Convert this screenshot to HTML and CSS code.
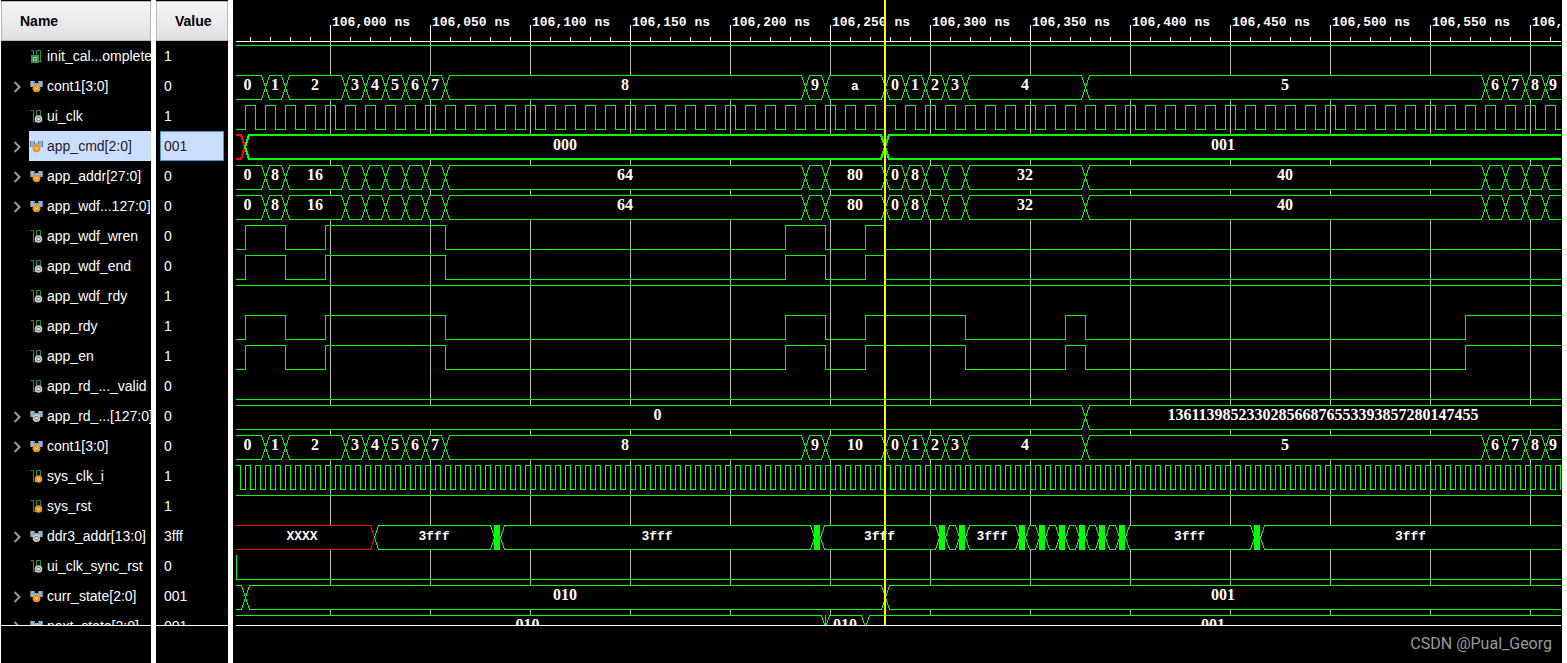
FILE: index.html
```html
<!DOCTYPE html>
<html lang="en">
<head>
	<meta charset="UTF-8">
	<title>Waveform</title>
	<link rel="stylesheet" href="styles.css">
</head>
<body>
	<svg class="defs" aria-hidden="true">
		<symbol id="icon-lock" viewBox="0 0 13 13">
			<path d="M1 0.5H3.5V6M6.5 6V0.5H10.5V11.5M9 11.5H12" fill="none" stroke="#239445"/>
			<rect x="1" y="5" width="8" height="8" fill="#3c8c4a"/>
			<rect x="3.5" y="7.5" width="3" height="3" fill="none" stroke="#8cc898"/>
		</symbol>
		<symbol id="icon-bit" viewBox="0 0 13 13">
			<path d="M1 0.5H3.5V11.5H6.5V0.5H10.5V6" fill="none" stroke="#239445"/>
			<circle cx="8.5" cy="9" r="3" fill="#777" stroke="#ccc" stroke-width="1.6"/>
			<circle cx="8.5" cy="9" r="1.3" fill="#eee"/>
		</symbol>
		<symbol id="icon-bit-v" viewBox="0 0 13 13">
			<path d="M1 0.5H3.5V11.5H6.5V0.5H10.5V6" fill="none" stroke="#239445"/>
			<circle cx="8.5" cy="9" r="3.8" fill="#f0921e"/>
			<path d="M7 7.5L8.5 10.5L10 7.5" fill="none" stroke="#ffe0b0"/>
		</symbol>
		<symbol id="icon-bus" viewBox="0 0 13 13">
			<path d="M0 1H5V3H8V1H13V7H10L8 5H5L3 7H0Z" fill="#8fb4cc"/>
			<path d="M0 1H1V7H0ZM12 1H13V7H12ZM4 1H5V4H4ZM8 1H9V4H8Z" fill="#5f7f94"/>
			<circle cx="6.5" cy="8.3" r="3" fill="#777" stroke="#ccc" stroke-width="1.6"/>
			<circle cx="6.5" cy="8.3" r="1.3" fill="#eee"/>
		</symbol>
		<symbol id="icon-bus-v" viewBox="0 0 13 13">
			<path d="M0 1H5V3H8V1H13V7H10L8 5H5L3 7H0Z" fill="#8fb4cc"/>
			<path d="M0 1H1V7H0ZM12 1H13V7H12ZM4 1H5V4H4ZM8 1H9V4H8Z" fill="#5f7f94"/>
			<circle cx="6.5" cy="8.3" r="3.9" fill="#f0921e"/>
			<path d="M5 6.8L6.5 9.8L8 6.8" fill="none" stroke="#ffe0b0"/>
		</symbol>
	</svg>

	<main class="viewer">
		<section class="pane names">
			<h2 class="head">Name</h2>
			<ul class="rows" id="names"></ul>
			<div class="foot"></div>
		</section>
		<section class="pane values">
			<h2 class="head">Value</h2>
			<ul class="rows" id="values"></ul>
			<div class="foot"></div>
		</section>
		<section class="pane waves">
			<svg class="ruler" id="ruler"></svg>
			<div class="rows" id="waves"></div>
			<div class="foot"><span class="mark">CSDN @Pual_Georg</span></div>
			<div class="cursor"></div>
		</section>
	</main>

	<script src="wave.js"></script>
</body>
</html>
```
FILE: styles.css
```css
body{
	margin: 0;
	background: #fff;
	font-family: "Liberation Sans", Arial, sans-serif;
	font-size: 14px;
}

.defs{
	position: absolute;
	width: 0;
	height: 0;
}

.viewer{
	display: flex;
	gap: 5px;
	height: 100vh;
	padding: 0 5px 0 1px;
	box-sizing: border-box;
}

.pane{
	display: flex;
	flex-direction: column;
	background: #000;
	color: #fff;
	overflow: hidden;
}

.names{
	flex: 0 0 150px;
}

.values{
	flex: 0 0 72px;
}

.waves{
	flex: 1;
	min-width: 0;
	position: relative;
}

.head{
	flex: 0 0 40px;
	margin: 1px 0 0;
	padding-left: 18px;
	box-sizing: border-box;
	border: 1px solid #b9b9bb;
	background: linear-gradient(#f6f6f6, #e0e0e4);
	color: #000;
	font-size: 14px;
	line-height: 38px;
}

.rows{
	flex: 1;
	min-height: 0;
	margin: 0;
	padding: 0;
	list-style: none;
	overflow: hidden;
}

.foot{
	flex: 0 0 37px;
	border-top: 1px solid #fff;
}

/* name column */
.name{
	display: flex;
	align-items: center;
	height: 30px;
	white-space: nowrap;
}

.toggle{
	flex: 0 0 28px;
	height: 30px;
	padding: 2px 0 0 12px;
	box-sizing: border-box;
	border: 0;
	background: none;
	text-align: left;
}

.toggle svg{
	display: block;
	width: 8px;
	height: 12px;
	fill: none;
	stroke: #999;
	stroke-width: 2;
}

.label{
	display: flex;
	align-items: center;
	flex: 1;
	gap: 4px;
	padding-left: 1px;
	line-height: 30px;
}

.label svg{
	flex: 0 0 13px;
	height: 13px;
}

/* value column */
.value{
	height: 30px;
	margin: 0 4px;
	padding-left: 4px;
	box-sizing: border-box;
	line-height: 30px;
}

.selected .label{
	background: #ccdeff;
	color: #1c1c2c;
}

.value.selected{
	padding-left: 3px;
	border: 1px solid #4a96d8;
	background: #ccdeff;
	color: #1c1c2c;
	line-height: 28px;
}

/* wave column */
.ruler{
	flex: 0 0 42px;
	margin: 0 1px 0 3px;
	shape-rendering: crispEdges;
}

.ruler path{
	fill: none;
	stroke: #fff;
}

.ruler text{
	fill: #fff;
	font: bold 13px "Liberation Mono", "Courier New", monospace;
}

.waves .rows{
	margin: -1px 1px 0 3px;
}

.waves .foot{
	margin: 0 1px 0 3px;
}

.wave{
	display: block;
	width: 100%;
	height: 30px;
	shape-rendering: crispEdges;
}

.wave text{
	fill: #fff;
	font: bold 16px "Liberation Serif", "Times New Roman", serif;
	text-anchor: middle;
}

.wave .hex{
	font: bold 13px "Liberation Mono", "Courier New", monospace;
}

.grid{
	stroke: #b8b8b8;
}

.sig{
	fill: none;
	stroke: #0f0;
}

.bus{
	fill: #000;
	stroke: #0f0;
}

.thick{
	stroke-width: 2;
}

.unknown{
	stroke: #f00;
}

.burst{
	fill: #0f0;
}

.cursor{
	position: absolute;
	left: 651px;
	top: 0;
	bottom: 38px;
	width: 2px;
	background: #ff0;
}

.mark{
	display: block;
	padding-right: 9px;
	color: #999;
	font: 16px/36px Roboto, sans-serif;
	text-align: right;
}
```
FILE: wave.js
```javascript
var START = -6,   // the first segment begins a little before the pane
	GRID = 94,    // x of 106,000 ns, 2px per ns
	TOP = 4.5,
	BOTTOM = 28.5;

// bus: [end x, label], the last one runs to the edge of the pane
var count = [[29,"0"],[49,"1"],[109,"2"],[129,"3"],[149,"4"],[169,"5"],[189,"6"],[209,"7"],[569,"8"],[589,"9"],[649,"a"],
	[669,"0"],[689,"1"],[709,"2"],[729,"3"],[849,"4"],[1249,"5"],[1269,"6"],[1289,"7"],[1309,"8"],[null,"9"]];
var count10 = count.map(function(s){ return s[1] == "a" ? [s[0],"10"] : s; });
var addr = [[29,"0"],[49,"8"],[109,"16"],[129,""],[149,""],[169,""],[189,""],[209,""],[569,"64"],[589,""],[649,"80"],
	[669,"0"],[689,"8"],[709,""],[729,""],[849,"32"],[1249,"40"],[1269,""],[1289,""],[1309,""],[null,""]];
// third value is the width of a burst of changes that follows
var ddr = [[138,"XXXX"],[258,"3fff",6],[578,"3fff",6],[703,"3fff",6],[723,"",6],[783,"3fff",6],[803,"",6],[823,"",6],
	[843,"",6],[863,"",6],[883,"",6],[1018,"3fff",6],[null,"3fff"]];
var wren = [9,49,89,209,549,589,629,649];
var rdy = [9,49,89,209,549,589,629,729,829,849,1229];

var signals = [
	{name:"init_cal...omplete", value:"1", icon:"lock", high:1, edges:[]},
	{name:"cont1[3:0]", value:"0", icon:"bus-v", bus:count},
	{name:"ui_clk", value:"1", icon:"bit", clock:10, first:9},
	{name:"app_cmd[2:0]", value:"001", icon:"bus-v", bus:[[9,""],[649,"000"],[null,"001"]], red:1, selected:1},
	{name:"app_addr[27:0]", value:"0", icon:"bus-v", bus:addr},
	{name:"app_wdf...127:0]", value:"0", icon:"bus-v", bus:addr},
	{name:"app_wdf_wren", value:"0", icon:"bit", edges:wren},
	{name:"app_wdf_end", value:"0", icon:"bit", edges:wren},
	{name:"app_wdf_rdy", value:"1", icon:"bit", high:1, edges:[]},
	{name:"app_rdy", value:"1", icon:"bit", edges:rdy},
	{name:"app_en", value:"1", icon:"bit", edges:rdy},
	{name:"app_rd_..._valid", value:"0", icon:"bit", edges:[]},
	{name:"app_rd_...[127:0]", value:"0", icon:"bus", bus:[[849,"0"],[null,"136113985233028566876553393857280147455"]]},
	{name:"cont1[3:0]", value:"0", icon:"bus-v", bus:count10},
	{name:"sys_clk_i", value:"1", icon:"bit-v", high:1, clock:5, first:4},
	{name:"sys_rst", value:"1", icon:"bit-v", high:1, edges:[]},
	{name:"ddr3_addr[13:0]", value:"3fff", icon:"bus", bus:ddr, red:1},
	{name:"ui_clk_sync_rst", value:"0", icon:"bit", high:1, edges:[0]},
	{name:"curr_state[2:0]", value:"001", icon:"bus-v", bus:[[9,""],[649,"010"],[null,"001"]]},
	{name:"next_state[2:0]", value:"001", icon:"bus-v", bus:[[589,"010",1],[629,"010"],[null,"001"]]}
];

function drawBit(s, width){
	var high = s.high, edges = s.edges;
	if(s.clock){
		edges = [];
		for(var x = s.first; x < width; x += s.clock){
			edges.push(x);
		}
	}
	var d = "M0 " + (high ? TOP : BOTTOM);
	edges.forEach(function(x){
		high = !high;
		d += "H" + (x + 0.5) + "V" + (high ? TOP : BOTTOM);
	});
	return '<path class="sig" d="' + d + "H" + width + '"/>';
}

function drawBus(s, width){
	var out = "", from = START, off = s.selected ? 0 : 0.5;
	s.bus.forEach(function(seg, i){
		var last = seg[0] === null,
			end = last ? width : seg[0],
			a = from + off,
			b = end + off,
			t = 4 + off,
			m = 16 + off,
			u = 28 + off,
			cls = "bus";
		if(s.selected) cls += " thick";
		if(s.red && i == 0) cls += " unknown";
		// open on the side that is cut by the pane
		var left = i == 0 ? "M" + (START - 20) + " " + u + "V" + t : "M" + (a + 4) + " " + u + "L" + a + " " + m + "L" + (a + 4) + " " + t;
		var right = last ? "H" + (width + 20) + "V" + u + "Z" : "H" + (b - 4) + "L" + b + " " + m + "L" + (b - 4) + " " + u + "Z";
		out += '<path class="' + cls + '" d="' + left + right + '"/>';
		if(seg[1]){
			out += '<text' + (/[a-zX]/.test(seg[1]) ? ' class="hex"' : '') + ' x="' + (from + end) / 2 + '" y="19">' + seg[1] + '</text>';
		}
		if(seg[2]){
			out += '<rect class="burst" x="' + end + '" y="4" width="' + seg[2] + '" height="25"/>';
		}
		from = end + (seg[2] > 1 ? seg[2] : 0);
	});
	return out;
}

function draw(){
	var names = "", values = "", waves = "", ruler = "", grid = "", x;
	var width = document.getElementById("waves").clientWidth;

	for(x = GRID; x < width; x += 100){
		grid += "M" + (x + 0.5) + " 0V30";
	}

	signals.forEach(function(s){
		var sel = s.selected ? " selected" : "";
		names += '<li class="name' + sel + '">' +
			(s.bus ? '<button class="toggle" aria-label="Expand"><svg viewBox="0 0 8 12"><path d="M1.5 1L6.5 6L1.5 11"/></svg></button>' : '<span class="toggle"></span>') +
			'<span class="label"><svg><use href="#icon-' + s.icon + '"/></svg>' + s.name + '</span></li>';
		values += '<li class="value' + sel + '">' + s.value + '</li>';
		waves += '<svg class="wave"><path class="grid" d="' + grid + '"/>' + (s.bus ? drawBus(s, width) : drawBit(s, width)) + '</svg>';
	});

	// time ruler
	var ns = 106000, d = "M0 41.5H" + width;
	for(x = GRID % 20; x < width; x += 20){
		d += "M" + (x + 0.5) + " 41V37";
	}
	for(x = GRID; x < width; x += 100){
		d += "M" + (x + 0.5) + " 41V25";
		ruler += '<text x="' + (x + 2) + '" y="26">' + ns.toLocaleString("en-US") + ' ns</text>';
		ns += 50;
	}

	document.getElementById("names").innerHTML = names;
	document.getElementById("values").innerHTML = values;
	document.getElementById("waves").innerHTML = waves;
	document.getElementById("ruler").innerHTML = '<path d="' + d + '"/>' + ruler;
}

draw();
window.onresize = draw;
```
